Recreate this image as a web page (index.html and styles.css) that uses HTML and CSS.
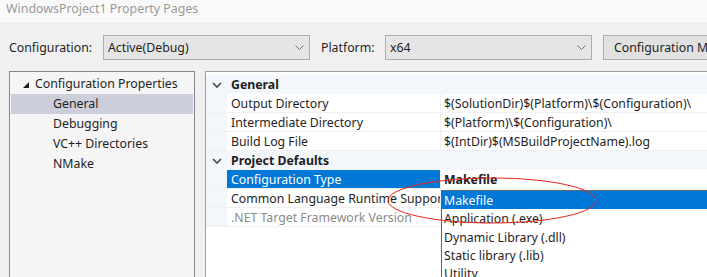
FILE: index.html
```html
<!DOCTYPE html>
<html>
<head>
<meta charset="utf-8">
<link rel="stylesheet" href="styles.css">
</head>
<body>
<div class="window">
  <div class="titlebar">WindowsProject1 Property Pages</div>
  <div class="toolbar">
    <span class="label">Configuration:</span>
    <div class="combo combo-config"><span>Active(Debug)</span><svg class="chev" width="9" height="6" viewBox="0 0 9 6"><path d="M0.5 0.5 L4.5 4.5 L8.5 0.5" fill="none" stroke="#707070" stroke-width="1"/></svg></div>
    <span class="label label-platform">Platform:</span>
    <div class="combo combo-platform"><span>x64</span><svg class="chev" width="9" height="6" viewBox="0 0 9 6"><path d="M0.5 0.5 L4.5 4.5 L8.5 0.5" fill="none" stroke="#707070" stroke-width="1"/></svg></div>
    <div class="button">Configuration Manager...</div>
  </div>
  <div class="main">
    <div class="tree">
      <div class="tree-row root"><svg class="tri" width="8" height="8" viewBox="0 0 8 8"><path d="M7 1 L7 7 L1 7 Z" fill="#1e1e1e"/></svg><span>Configuration Properties</span></div>
      <div class="tree-row child selected">General</div>
      <div class="tree-row child">Debugging</div>
      <div class="tree-row child">VC++ Directories</div>
      <div class="tree-row child">NMake</div>
    </div>
    <div class="grid">
      <div class="cat"><svg class="cchev" width="10" height="6" viewBox="0 0 10 6"><path d="M1 1 L5 5 L9 1" fill="none" stroke="#444" stroke-width="1.6"/></svg><span>General</span></div>
      <div class="prop"><div class="name">Output Directory</div><div class="value">$(SolutionDir)$(Platform)\$(Configuration)\</div></div>
      <div class="prop"><div class="name">Intermediate Directory</div><div class="value">$(Platform)\$(Configuration)\</div></div>
      <div class="prop"><div class="name">Build Log File</div><div class="value">$(IntDir)$(MSBuildProjectName).log</div></div>
      <div class="cat"><svg class="cchev" width="10" height="6" viewBox="0 0 10 6"><path d="M1 1 L5 5 L9 1" fill="none" stroke="#444" stroke-width="1.6"/></svg><span>Project Defaults</span></div>
      <div class="prop active"><div class="name">Configuration Type</div><div class="value bold">Makefile</div></div>
      <div class="prop"><div class="name">Common Language Runtime Support</div><div class="value"></div></div>
      <div class="prop disabled"><div class="name">.NET Target Framework Version</div><div class="value"></div></div>
      <div class="list">
        <div class="item sel">Makefile</div>
        <div class="item">Application (.exe)</div>
        <div class="item">Dynamic Library (.dll)</div>
        <div class="item">Static library (.lib)</div>
        <div class="item">Utility</div>
      </div>
    </div>
  </div>
  <svg class="ellipse" width="707" height="277" viewBox="0 0 707 277"><ellipse cx="492" cy="200.5" rx="104" ry="22.5" fill="none" stroke="#e8251a" stroke-width="1"/></svg>
</div>
</body>
</html>
```
FILE: styles.css
```css
html, body {
  margin: 0;
  padding: 0;
}
body {
  width: 707px;
  height: 277px;
  overflow: hidden;
  background: #f0f0f0;
  font-family: "Noto Sans", "Open Sans", sans-serif;
  font-size: 12.3px;
  color: #1e1e1e;
}
.window {
  position: relative;
  width: 707px;
  height: 277px;
  overflow: hidden;
}
.titlebar {
  height: 22px;
  background: #f9f9f9;
  color: #9a9a9a;
  font-size: 12.4px;
  line-height: 17px;
  padding-left: 6px;
}
.toolbar {
  display: flex;
  align-items: center;
  height: 26px;
  margin-top: 12px;
  white-space: nowrap;
}
.label {
  margin-left: 9px;
  width: 94px;
  flex: none;
}
.label-platform {
  margin-left: 11px;
  width: 64px;
}
.combo {
  box-sizing: border-box;
  height: 25px;
  background: #e5e5e5;
  border: 1px solid #adadad;
  display: flex;
  align-items: center;
  justify-content: space-between;
  padding: 0 5px 0 4px;
  flex: none;
}
.combo-config { width: 207px; }
.combo-platform { width: 207px; }
.chev { margin-top: 1px; }
.button {
  box-sizing: border-box;
  margin-left: 11px;
  height: 25px;
  background: #e1e1e1;
  border: 1px solid #adadad;
  padding: 0 0 0 10px;
  line-height: 23px;
  width: 200px;
  flex: none;
  overflow: hidden;
}
.main {
  display: flex;
  margin-top: 11px;
  height: 220px;
}
.tree {
  box-sizing: border-box;
  margin-left: 9px;
  width: 186px;
  flex: none;
  border: 1px solid #828790;
  border-bottom: none;
  background: #f5f5f5;
  padding: 2px 1px 0 1px;
}
.tree-row {
  height: 20px;
  line-height: 20px;
  white-space: nowrap;
}
.tree-row.root {
  display: flex;
  align-items: center;
}
.tri { margin-left: 11px; margin-right: 14px; margin-top: 1px; }
.tree-row.root span { margin-left: -9px; padding-left: 0; }
.tree-row.child { padding-left: 42px; }
.tree-row.selected { background: #cccedb; }
.grid {
  position: relative;
  box-sizing: border-box;
  margin-left: 10px;
  flex: 1;
  border-top: 1px solid #a0a0a0;
  border-left: 1px solid #a0a0a0;
  background: #fff;
  padding-top: 3px;
}
.cat, .prop {
  height: 18px;
  line-height: 20px;
  border-bottom: 1px solid #f0f0f0;
  white-space: nowrap;
}
.cat {
  background: #f3f6fa;
  font-weight: bold;
  display: flex;
  align-items: center;
  border-bottom-color: #f3f6fa;
}
.cat span { line-height: 20px; margin-top: 1px; }
.cchev { margin-left: 6px; margin-right: 9px; margin-top: 1px; }
.prop {
  display: flex;
  background: #f3f6fa;
}
.prop .name {
  box-sizing: border-box;
  margin-left: 21px;
  width: 214px;
  padding-left: 4px;
  background: #fff;
  overflow: hidden;
  flex: none;
  border-right: 1px solid #f0f0f0;
}
.prop .value {
  flex: 1;
  background: #fff;
  padding-left: 3px;
}
.prop .value.bold { font-weight: bold; }
.prop.active .name {
  background: #0078d7;
  color: #fff;
}
.prop.disabled .name { color: #8a8a8a; }
.list {
  position: absolute;
  left: 235px;
  top: 118px;
  width: 300px;
  height: 120px;
  box-sizing: border-box;
  border: 1px solid #646464;
  background: #fff;
}
.item {
  height: 18.3px;
  line-height: 20px;
  padding-left: 2px;
  white-space: nowrap;
}
.item.sel {
  background: #0078d7;
  color: #fff;
}
.ellipse {
  position: absolute;
  left: 0;
  top: 0;
  pointer-events: none;
}
```
